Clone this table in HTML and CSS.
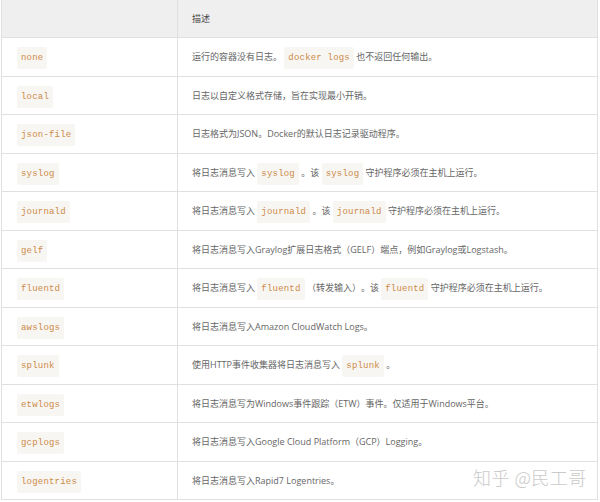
FILE: index.html
```html
<!DOCTYPE html>
<html lang="zh">
<head>
<meta charset="utf-8">
<link rel="stylesheet" href="styles.css">
</head>
<body>
<div class="wrap">
<table class="tbl">
  <thead>
    <tr><th class="c1"></th><th class="c2">描述</th></tr>
  </thead>
  <tbody>
    <tr><td class="c1"><code>none</code></td><td class="c2">运行的容器没有日志。 <code>docker logs</code> 也不返回任何输出。</td></tr>
    <tr><td class="c1"><code>local</code></td><td class="c2">日志以自定义格式存储，旨在实现最小开销。</td></tr>
    <tr><td class="c1"><code>json-file</code></td><td class="c2">日志格式为JSON。Docker的默认日志记录驱动程序。</td></tr>
    <tr><td class="c1"><code>syslog</code></td><td class="c2">将日志消息写入 <code>syslog</code> 。该 <code>syslog</code> 守护程序必须在主机上运行。</td></tr>
    <tr><td class="c1"><code>journald</code></td><td class="c2">将日志消息写入 <code>journald</code> 。该 <code>journald</code> 守护程序必须在主机上运行。</td></tr>
    <tr><td class="c1"><code>gelf</code></td><td class="c2">将日志消息写入Graylog扩展日志格式（GELF）端点，例如Graylog或Logstash。</td></tr>
    <tr><td class="c1"><code>fluentd</code></td><td class="c2">将日志消息写入 <code>fluentd</code> （转发输入）。该 <code>fluentd</code> 守护程序必须在主机上运行。</td></tr>
    <tr><td class="c1"><code>awslogs</code></td><td class="c2">将日志消息写入Amazon CloudWatch Logs。</td></tr>
    <tr><td class="c1"><code>splunk</code></td><td class="c2">使用HTTP事件收集器将日志消息写入 <code>splunk</code> 。</td></tr>
    <tr><td class="c1"><code>etwlogs</code></td><td class="c2">将日志消息写为Windows事件跟踪（ETW）事件。仅适用于Windows平台。</td></tr>
    <tr><td class="c1"><code>gcplogs</code></td><td class="c2">将日志消息写入Google Cloud Platform（GCP）Logging。</td></tr>
    <tr><td class="c1"><code>logentries</code></td><td class="c2">将日志消息写入Rapid7 Logentries。</td></tr>
  </tbody>
</table>
<div class="mark">知乎 @民工哥</div>
</div>
</body>
</html>
```

FILE: styles.css
```css
html, body {
  margin: 0;
  padding: 0;
  background: #fff;
}
.wrap {
  position: relative;
  width: 600px;
  height: 502px;
  overflow: hidden;
}
.tbl {
  border-collapse: collapse;
  table-layout: fixed;
  width: 597px;
  margin-left: 1px;
  font-family: "Open Sans", "Noto Sans CJK SC", sans-serif;
  font-size: 9px;
  color: #666;
  text-spacing-trim: space-all;
}
.tbl th, .tbl td {
  border: 1px solid #e0e0e0;
  text-align: left;
  vertical-align: middle;
  padding: 0 14px;
  height: 37.5px;
  white-space: nowrap;
}
.tbl thead th {
  background: #efefef;
  border-top: none;
  font-weight: normal;
  color: #444;
  height: 37px;
}
.tbl .c1 {
  width: 146px;
  padding-left: 15px;
}
.tbl code {
  font-family: "Liberation Mono", "DejaVu Sans Mono", monospace;
  font-size: 9px;
  color: #cc8a48;
  background: #f8f6f3;
  padding: 6px 4px;
  border-radius: 2px;
  letter-spacing: 0.2px;
}
.mark {
  position: absolute;
  left: 473px;
  top: 465px;
  font-family: "Noto Sans CJK SC", sans-serif;
  font-size: 18px;
  line-height: 24px;
  font-weight: 300;
  color: #cacaca;
  letter-spacing: 0.5px;
}
```
